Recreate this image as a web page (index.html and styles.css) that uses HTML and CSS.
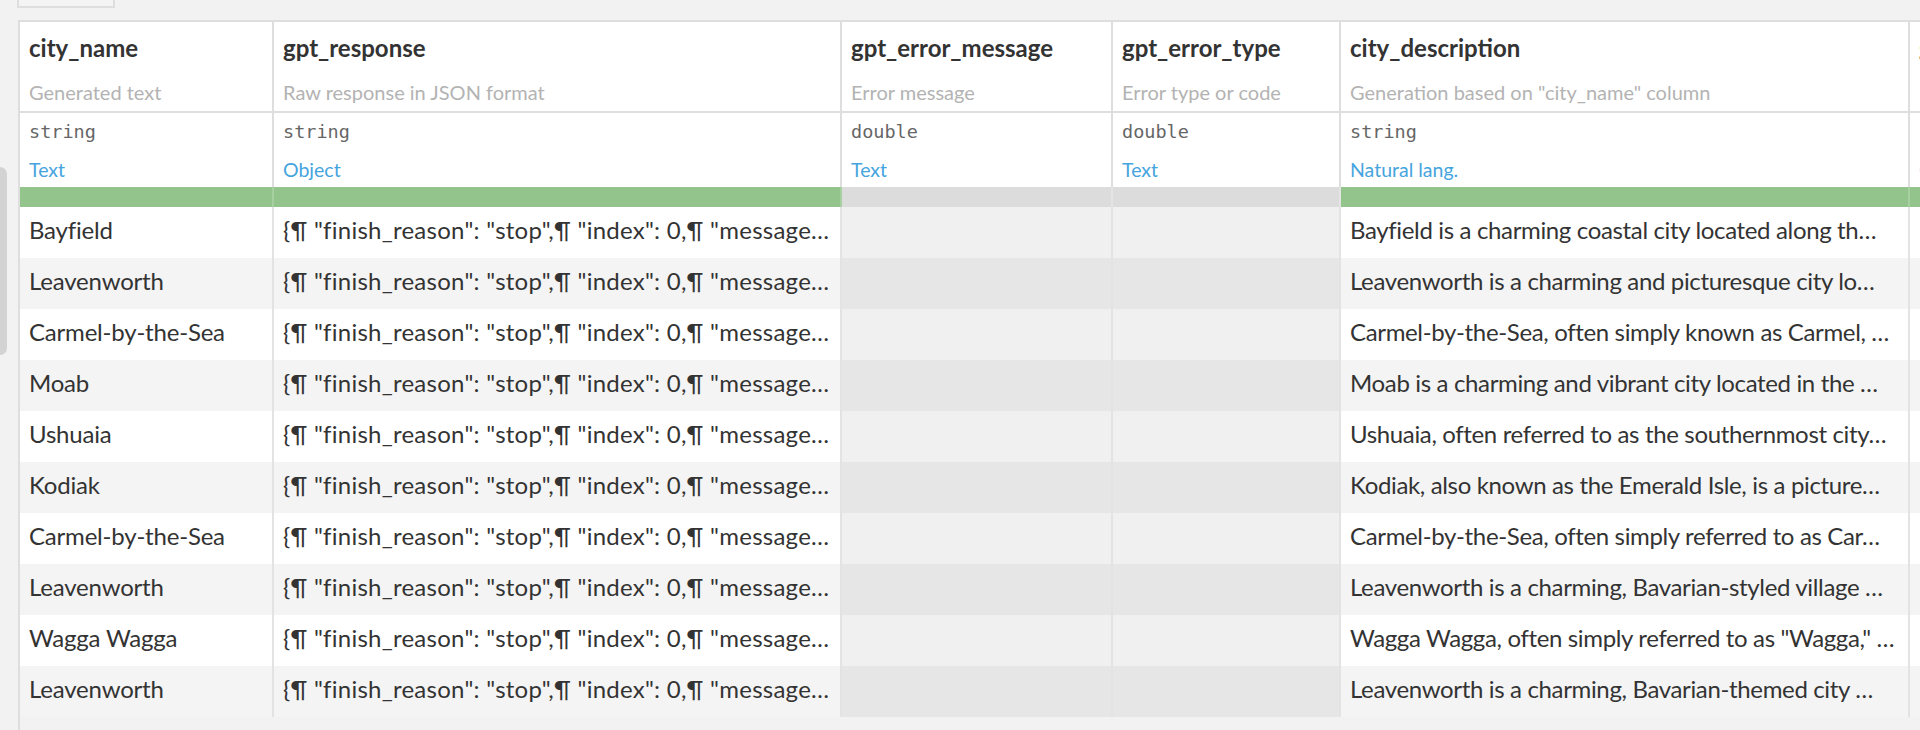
FILE: index.html
```html
<!DOCTYPE html>
<html>
<head>
<meta charset="utf-8">
<link rel="stylesheet" href="styles.css">
</head>
<body>
<div class="handle"></div>
<div class="toolbar"><div class="tool-btn"></div></div>
<div class="table">
  <div class="row hdr">
    <div class="cell"><div class="name">city_name</div><div class="desc">Generated text</div></div>
    <div class="cell"><div class="name">gpt_response</div><div class="desc">Raw response in JSON format</div></div>
    <div class="cell"><div class="name">gpt_error_message</div><div class="desc">Error message</div></div>
    <div class="cell"><div class="name">gpt_error_type</div><div class="desc">Error type or code</div></div>
    <div class="cell"><div class="name">city_description</div><div class="desc">Generation based on "city_name" column</div></div>
    <div class="cell last"><div class="name">g</div><div class="desc">R</div></div>
  </div>
  <div class="row types">
    <div class="cell"><div class="type">string</div><div class="meaning">Text</div></div>
    <div class="cell"><div class="type">string</div><div class="meaning">Object</div></div>
    <div class="cell"><div class="type">double</div><div class="meaning">Text</div></div>
    <div class="cell"><div class="type">double</div><div class="meaning">Text</div></div>
    <div class="cell"><div class="type">string</div><div class="meaning">Natural lang.</div></div>
    <div class="cell last"><div class="type">s</div><div class="meaning">O</div></div>
  </div>
  <div class="row bars">
    <div class="cell ok"></div>
    <div class="cell ok"></div>
    <div class="cell empty"></div>
    <div class="cell empty"></div>
    <div class="cell ok"></div>
    <div class="cell ok last"></div>
  </div>
  <div class="row data">
    <div class="cell">Bayfield</div>
    <div class="cell json">{¶ "finish_reason": "stop",¶ "index": 0,¶ "message…</div>
    <div class="cell nil"></div><div class="cell nil"></div>
    <div class="cell text">Bayfield is a charming coastal city located along th…</div>
    <div class="cell last">-</div>
  </div>
  <div class="row data">
    <div class="cell">Leavenworth</div>
    <div class="cell json">{¶ "finish_reason": "stop",¶ "index": 0,¶ "message…</div>
    <div class="cell nil"></div><div class="cell nil"></div>
    <div class="cell text">Leavenworth is a charming and picturesque city lo…</div>
    <div class="cell last">-</div>
  </div>
  <div class="row data">
    <div class="cell">Carmel-by-the-Sea</div>
    <div class="cell json">{¶ "finish_reason": "stop",¶ "index": 0,¶ "message…</div>
    <div class="cell nil"></div><div class="cell nil"></div>
    <div class="cell text">Carmel-by-the-Sea, often simply known as Carmel, …</div>
    <div class="cell last">-</div>
  </div>
  <div class="row data">
    <div class="cell">Moab</div>
    <div class="cell json">{¶ "finish_reason": "stop",¶ "index": 0,¶ "message…</div>
    <div class="cell nil"></div><div class="cell nil"></div>
    <div class="cell text">Moab is a charming and vibrant city located in the …</div>
    <div class="cell last">-</div>
  </div>
  <div class="row data">
    <div class="cell">Ushuaia</div>
    <div class="cell json">{¶ "finish_reason": "stop",¶ "index": 0,¶ "message…</div>
    <div class="cell nil"></div><div class="cell nil"></div>
    <div class="cell text">Ushuaia, often referred to as the southernmost city…</div>
    <div class="cell last">-</div>
  </div>
  <div class="row data">
    <div class="cell">Kodiak</div>
    <div class="cell json">{¶ "finish_reason": "stop",¶ "index": 0,¶ "message…</div>
    <div class="cell nil"></div><div class="cell nil"></div>
    <div class="cell text">Kodiak, also known as the Emerald Isle, is a picture…</div>
    <div class="cell last">-</div>
  </div>
  <div class="row data">
    <div class="cell">Carmel-by-the-Sea</div>
    <div class="cell json">{¶ "finish_reason": "stop",¶ "index": 0,¶ "message…</div>
    <div class="cell nil"></div><div class="cell nil"></div>
    <div class="cell text">Carmel-by-the-Sea, often simply referred to as Car…</div>
    <div class="cell last">-</div>
  </div>
  <div class="row data">
    <div class="cell">Leavenworth</div>
    <div class="cell json">{¶ "finish_reason": "stop",¶ "index": 0,¶ "message…</div>
    <div class="cell nil"></div><div class="cell nil"></div>
    <div class="cell text">Leavenworth is a charming, Bavarian-styled village …</div>
    <div class="cell last">-</div>
  </div>
  <div class="row data">
    <div class="cell">Wagga Wagga</div>
    <div class="cell json">{¶ "finish_reason": "stop",¶ "index": 0,¶ "message…</div>
    <div class="cell nil"></div><div class="cell nil"></div>
    <div class="cell text">Wagga Wagga, often simply referred to as "Wagga," …</div>
    <div class="cell last">-</div>
  </div>
  <div class="row data">
    <div class="cell">Leavenworth</div>
    <div class="cell json">{¶ "finish_reason": "stop",¶ "index": 0,¶ "message…</div>
    <div class="cell nil"></div><div class="cell nil"></div>
    <div class="cell text">Leavenworth is a charming, Bavarian-themed city …</div>
    <div class="cell last">-</div>
  </div>
</div>
</body>
</html>
```
FILE: styles.css
```css
* { box-sizing: border-box; }
html, body {
  margin: 0;
  padding: 0;
  width: 1920px;
  height: 730px;
  overflow: hidden;
  background: #f2f2f2;
  font-family: "Lato", "Liberation Sans", sans-serif;
  color: #333;
}
.handle {
  position: absolute;
  left: 0;
  top: 167px;
  width: 7px;
  height: 188px;
  background: #d3d3d3;
  border-radius: 0 8px 8px 0;
}
.toolbar {
  height: 20px;
  padding-left: 17px;
  display: flex;
  align-items: flex-start;
}
.tool-btn {
  width: 98px;
  height: 8px;
  border: 2px solid #dedede;
  border-top: none;
  background: #f4f4f4;
}
.table {
  margin-left: 18px;
  border-left: 2px solid #dedede;
  border-top: 2px solid #dedede;
  height: 710px;
}
.row {
  display: grid;
  grid-template-columns: 254px 568px 271px 228px 569px 12px;
}
.cell {
  border-right: 2px solid #dedede;
  padding-left: 9px;
  white-space: nowrap;
  overflow: hidden;
  text-overflow: ellipsis;
}
.cell.last {
  border-right: none;
  text-overflow: clip;
}
.hdr .cell {
  background: #fff;
  height: 91px;
  border-bottom: 2px solid #dedede;
  padding-top: 10px;
}
.name {
  font-size: 24px;
  font-weight: 700;
  line-height: 32px;
  color: #333;
}
.desc {
  margin-top: 15px;
  font-size: 20px;
  line-height: 26px;
  color: #b3b3b3;
}
.types .cell {
  background: #fff;
  height: 74px;
  padding-top: 6px;
}
.type {
  font-family: "DejaVu Sans Mono", "Liberation Mono", monospace;
  font-size: 18.5px;
  line-height: 26px;
  color: #666;
}
.meaning {
  margin-top: 12px;
  font-size: 19.5px;
  line-height: 26px;
  color: #45a4de;
}
.bars .cell {
  height: 20px;
}
.bars .ok {
  background: #93c48b;
  border-right-color: #a7d0a0;
}
.bars .empty {
  background: #dcdcdc;
  border-right-color: #e4e4e4;
}
.data .cell {
  height: 51px;
  line-height: 46px;
  font-size: 24px;
  color: #333;
  background: #fff;
  border-right-color: #e3e3e3;
  letter-spacing: -0.2px;
}
.data .json {
  letter-spacing: 0.25px;
}
.data .text {
  letter-spacing: -0.35px;
}
.data:nth-child(odd) .cell {
  background: #f4f4f4;
}
.data .nil {
  background: #f0f0f0;
}
.data:nth-child(odd) .nil {
  background: #e6e6e6;
}
```
